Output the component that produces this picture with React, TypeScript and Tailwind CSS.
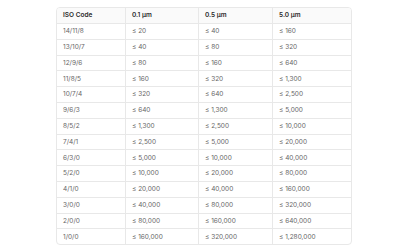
import React from 'react';

const rows: [string, string, string, string][] = [
  ['14/11/8', '20', '40', '160'],
  ['13/10/7', '40', '80', '320'],
  ['12/9/6', '80', '160', '640'],
  ['11/8/5', '160', '320', '1,300'],
  ['10/7/4', '320', '640', '2,500'],
  ['9/6/3', '640', '1,300', '5,000'],
  ['8/5/2', '1,300', '2,500', '10,000'],
  ['7/4/1', '2,500', '5,000', '20,000'],
  ['6/3/0', '5,000', '10,000', '40,000'],
  ['5/2/0', '10,000', '20,000', '80,000'],
  ['4/1/0', '20,000', '40,000', '160,000'],
  ['3/0/0', '40,000', '80,000', '320,000'],
  ['2/0/0', '80,000', '160,000', '640,000'],
  ['1/0/0', '160,000', '320,000', '1,280,000'],
];

const rowCls = 'grid grid-cols-[68px_73px_74px_1fr] h-[15.8px] border-t border-[#e8e8e8] items-stretch';
const cell = 'flex items-center px-[6px] border-l border-[#e8e8e8]';

export default function App() {
  return (
    <div className="w-[400px] h-[250px] bg-white pl-[56px] pt-[7px] font-['Inter','Liberation_Sans',sans-serif] text-[6.5px] leading-none">
      <div className="w-[296px] border border-[#e8e8e8] rounded-[4px] overflow-hidden">
        <div className="grid grid-cols-[68px_73px_74px_1fr] h-[15px] bg-[#fafafa] font-semibold text-[#2a2a2a]">
          <div className="flex items-center px-[6px]">ISO Code</div>
          <div className={cell}>0.1 µm</div>
          <div className={cell}>0.5 µm</div>
          <div className={cell}>5.0 µm</div>
        </div>
        {rows.map(r => (
          <div key={r[0]} className={rowCls + ' text-[#666666]'}>
            <div className="flex items-center px-[6px]">{r[0]}</div>
            <div className={cell}>≤ {r[1]}</div>
            <div className={cell}>≤ {r[2]}</div>
            <div className={cell}>≤ {r[3]}</div>
          </div>
        ))}
      </div>
    </div>
  );
}
